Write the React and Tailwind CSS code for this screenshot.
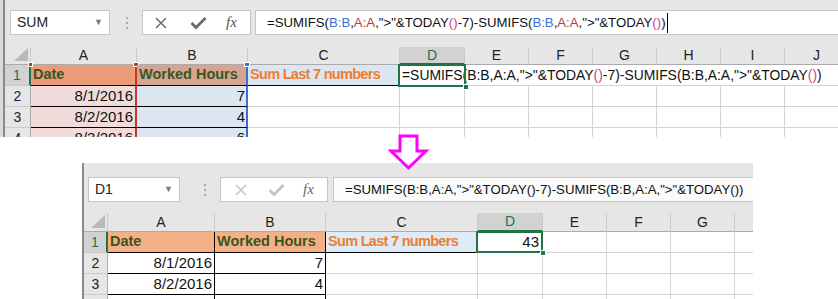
import React from 'react';

// colours taken from the Excel screenshot
const GRID = 'border-[#d4d4d4]';

function XIcon({ className }) {
  return (
    <svg width="14" height="14" viewBox="0 0 14 14" className={className}>
      <path d="M2 2L12 12M12 2L2 12" stroke="currentColor" strokeWidth="1.5" />
    </svg>
  );
}

function CheckIcon({ className }) {
  return (
    <svg width="17" height="14" viewBox="0 0 17 14" className={className}>
      <path d="M1.5 7L6 11.5L15.5 2" fill="none" stroke="currentColor" strokeWidth="2.8" />
    </svg>
  );
}

function Dots() {
  return (
    <div className="flex flex-col gap-[3px]">
      <span className="w-[2px] h-[2px] bg-[#a8a8a8]" />
      <span className="w-[2px] h-[2px] bg-[#a8a8a8]" />
      <span className="w-[2px] h-[2px] bg-[#a8a8a8]" />
    </div>
  );
}

function Corner() {
  return (
    <svg width="16" height="14" viewBox="0 0 16 14" className="absolute right-[1px] bottom-[2px]">
      <polygon points="15,0 15,13 1,13" fill="#b9b9b9" />
    </svg>
  );
}

function Arrow() {
  return (
    <span className="text-[9px] leading-none text-[#7a7a7a]">▼</span>
  );
}

const hdr =
  'flex items-center justify-center bg-[#e6e6e6] border-r border-b border-r-[#c9c9c9] border-b-[#ababab] text-[14px] text-[#222]';
const hdrSel =
  'flex items-center justify-center bg-[#d2d2d2] border-r border-r-[#c9c9c9] border-b-2 border-b-[#217346] text-[14px] text-[#217346]';
const rowHdr =
  'flex items-center justify-center bg-[#e6e6e6] border-r border-b border-r-[#ababab] border-b-[#c9c9c9] text-[14px] text-[#222]';
const rowHdrSel =
  'flex items-center justify-center bg-[#d2d2d2] border-r-2 border-b border-r-[#217346] border-b-[#c9c9c9] text-[14px] text-[#217346]';
const empty = `bg-white border-r border-b ${GRID}`;

function Selection() {
  return (
    <>
      <span className="absolute -left-[2px] -top-[1px] -right-[1px] -bottom-[1px] border-2 border-[#217346]" />
      <span className="absolute -right-[4px] -bottom-[4px] w-[6px] h-[6px] bg-[#217346] border border-white" />
    </>
  );
}

function TopSheet() {
  const blue = 'text-[#3d6fd0]';
  const red = 'text-[#c0392b]';
  const pink = 'text-[#d0457a]';
  return (
    <div className="h-[137px] w-[838px] overflow-hidden border-l-[3px] border-l-[#dadada]">
      <div className="h-full border-l-2 border-l-[#8a8a8a]">
        {/* formula bar */}
        <div className="flex items-start h-[47px] pt-[10px] bg-[#e6e6e6]">
          <div className="ml-[5px] w-[100px] h-[25px] bg-white border border-[#c6c6c6] flex items-center justify-between pl-[6px] pr-[6px] text-[14px] text-[#222]">
            <span>SUM</span>
            <Arrow />
          </div>
          <div className="w-[32px] h-[25px] flex items-center pl-[16px]">
            <Dots />
          </div>
          <div className="w-[109px] h-[25px] bg-white border border-[#c6c6c6] flex items-center text-[#6b6b6b]">
            <XIcon className="ml-[11px]" />
            <CheckIcon className="ml-[22px]" />
            <span className="ml-[19px] font-['Liberation_Serif',serif] italic text-[15px] text-[#555]">fx</span>
          </div>
          <div className="ml-[4px] flex-1 h-[25px] bg-white border border-r-0 border-[#c6c6c6] flex items-center pl-[11px] text-[13.2px] text-[#111] whitespace-nowrap">
            <span>=SUMIFS(</span>
            <span className={blue}>B:B</span>
            <span>,</span>
            <span className={red}>A:A</span>
            <span>{',">"&TODAY'}</span>
            <span className={pink}>()</span>
            <span>-7)-SUMIFS(</span>
            <span className={blue}>B:B</span>
            <span>,</span>
            <span className={red}>A:A</span>
            <span>{',">"&TODAY'}</span>
            <span className={pink}>()</span>
            <span>)</span>
            <span className="ml-[1px] w-px h-[20px] bg-black" />
          </div>
        </div>

        {/* sheet */}
        <div className="grid grid-cols-[26px_106px_111px_152px_65px_64px_64px_64px_64px_64px_64px] grid-rows-[18px_21px_21px_21px_21px] text-[15px] text-[#111]">
          <div className={`${hdr} relative`}>
            <Corner />
          </div>
          <div className={hdr}>A</div>
          <div className={hdr}>B</div>
          <div className={hdr}>C</div>
          <div className={hdrSel}>D</div>
          <div className={hdr}>E</div>
          <div className={hdr}>F</div>
          <div className={hdr}>G</div>
          <div className={hdr}>H</div>
          <div className={hdr}>I</div>
          <div className={hdr}>J</div>

          {/* row 1 */}
          <div className={rowHdrSel}>1</div>
          <div className="relative flex items-center pl-[2px] bg-[#ec9b78] border-b border-b-black border-r-2 border-r-[#c0392b] font-bold text-[14.5px] text-[#375623]">
            Date
            <span className="absolute -left-[3px] -top-[3px] w-[5px] h-[5px] bg-[#c0392b] border border-white" />
            <span className="absolute -right-[4px] -top-[3px] w-[6px] h-[5px] bg-[#c0392b] border border-white" />
          </div>
          <div className="relative flex items-center pl-[2px] bg-[#d7a491] border-b border-b-black border-r-2 border-r-[#3d6fd0] font-bold text-[14.5px] text-[#375623] whitespace-nowrap">
            Worked Hours
            <span className="absolute -right-[4px] -top-[3px] w-[6px] h-[5px] bg-[#3d6fd0] border border-white" />
          </div>
          <div className="flex items-center pl-[2px] bg-[#dce6f1] border-b border-b-black font-bold text-[14.5px] tracking-[-0.7px] text-[#ed7d31] whitespace-nowrap">
            Sum Last 7 numbers
          </div>
          <div className="relative flex items-center pl-[2px] bg-white whitespace-nowrap text-[13.9px]">
            <span>{'=SUMIFS(B:B,A:A,">"&TODAY'}</span>
            <span className={pink}>()</span>
            <span>{'-7)-SUMIFS(B:B,A:A,">"&TODAY'}</span>
            <span className={pink}>()</span>
            <span>)</span>
            <Selection />
          </div>
          <div className={`bg-white border-b ${GRID}`} />
          <div className={`bg-white border-b ${GRID}`} />
          <div className={`bg-white border-b ${GRID}`} />
          <div className={`bg-white border-b ${GRID}`} />
          <div className={`bg-white border-b ${GRID}`} />
          <div className={`bg-white border-b ${GRID}`} />

          {[
            ['2', '8/1/2016', '7'],
            ['3', '8/2/2016', '4'],
            ['4', '8/3/2016', '6'],
          ].map(([n, d, h]) => (
            <React.Fragment key={n}>
              <div className={rowHdr}>{n}</div>
              <div className="flex items-center justify-end pr-[2px] bg-[#f2dcdb] border-b border-b-black border-r-2 border-r-[#c0392b]">
                {d}
              </div>
              <div className="flex items-center justify-end pr-[1px] bg-[#dce6f1] border-b border-b-black border-r-2 border-r-[#3d6fd0]">
                {h}
              </div>
              <div className={empty} />
              <div className={empty} />
              <div className={empty} />
              <div className={empty} />
              <div className={empty} />
              <div className={empty} />
              <div className={empty} />
              <div className={empty} />
            </React.Fragment>
          ))}
        </div>
      </div>
    </div>
  );
}

function BottomSheet() {
  return (
    <div className="mt-[26px] ml-[82px] w-[671px] h-[136px] overflow-hidden border-l-2 border-l-[#8a8a8a]">
      <div className="flex items-start h-[50px] pt-[14px] bg-[#e6e6e6]">
        <div className="ml-[4px] w-[92px] h-[25px] bg-white border border-[#c6c6c6] flex items-center justify-between pl-[6px] pr-[6px] text-[14px] text-[#222]">
          <span>D1</span>
          <Arrow />
        </div>
        <div className="w-[40px] h-[25px] flex items-center pl-[24px]">
          <Dots />
        </div>
        <div className="w-[108px] h-[25px] bg-white border border-[#c6c6c6] flex items-center text-[#c4c4c4]">
          <XIcon className="ml-[13px]" />
          <CheckIcon className="ml-[20px]" />
          <span className="ml-[18px] font-['Liberation_Serif',serif] italic text-[15px] text-[#666]">fx</span>
        </div>
        <div className="ml-[5px] flex-1 h-[25px] bg-[#fbfbfb] border border-r-0 border-[#c6c6c6] flex items-center pl-[11px] text-[13.2px] text-[#111] whitespace-nowrap">
          {'=SUMIFS(B:B,A:A,">"&TODAY()-7)-SUMIFS(B:B,A:A,">"&TODAY())'}
        </div>
      </div>

      <div className="grid grid-cols-[24px_107px_111px_152px_65px_64px_64px_64px_64px] grid-rows-[19px_21px_21px_21px_21px] text-[15px] text-[#111]">
        <div className={`${hdr} relative`}>
          <Corner />
        </div>
        <div className={hdr}>A</div>
        <div className={hdr}>B</div>
        <div className={hdr}>C</div>
        <div className={hdrSel}>D</div>
        <div className={hdr}>E</div>
        <div className={hdr}>F</div>
        <div className={hdr}>G</div>
        <div className={hdr}>H</div>

        {/* row 1 */}
        <div className={rowHdrSel}>1</div>
        <div className="flex items-center pl-[2px] bg-[#f4b084] border-b border-r border-black font-bold text-[14.5px] text-[#375623]">
          Date
        </div>
        <div className="flex items-center pl-[2px] bg-[#f4b084] border-b border-r border-black font-bold text-[14.5px] text-[#375623] whitespace-nowrap">
          Worked Hours
        </div>
        <div className="flex items-center pl-[2px] bg-[#ddebf7] border-b border-b-black font-bold text-[14.5px] tracking-[-0.7px] text-[#ed7d31] whitespace-nowrap overflow-hidden">
          Sum Last 7 numbers
        </div>
        <div className="relative flex items-center justify-end pr-[3px] bg-white border-b border-r border-[#d4d4d4]">
          43
          <Selection />
        </div>
        <div className={empty} />
        <div className={empty} />
        <div className={empty} />
        <div className={empty} />

        {[
          ['2', '8/1/2016', '7'],
          ['3', '8/2/2016', '4'],
          ['4', '', ''],
        ].map(([n, d, h]) => (
          <React.Fragment key={n}>
            <div className={rowHdr}>{n}</div>
            <div className="flex items-center justify-end pr-[2px] bg-white border-b border-r border-black">{d}</div>
            <div className="flex items-center justify-end pr-[2px] bg-white border-b border-r border-black">{h}</div>
            <div className={empty} />
            <div className={empty} />
            <div className={empty} />
            <div className={empty} />
            <div className={empty} />
            <div className={empty} />
          </React.Fragment>
        ))}
      </div>
    </div>
  );
}

export default function App() {
  return (
    <div className="relative w-[838px] h-[299px] overflow-hidden bg-white font-['Liberation_Sans',Arial,sans-serif]">
      <TopSheet />
      <BottomSheet />
      {/* magenta arrow between the two shots */}
      <svg width="42" height="38" viewBox="0 0 42 38" className="absolute left-[388px] top-[133px]">
        <polygon
          points="12,3 29,3 29,18 38,18 20.5,35 3,18 12,18"
          fill="none"
          stroke="#ff00ff"
          strokeWidth="3"
          strokeLinejoin="miter"
        />
      </svg>
    </div>
  );
}
